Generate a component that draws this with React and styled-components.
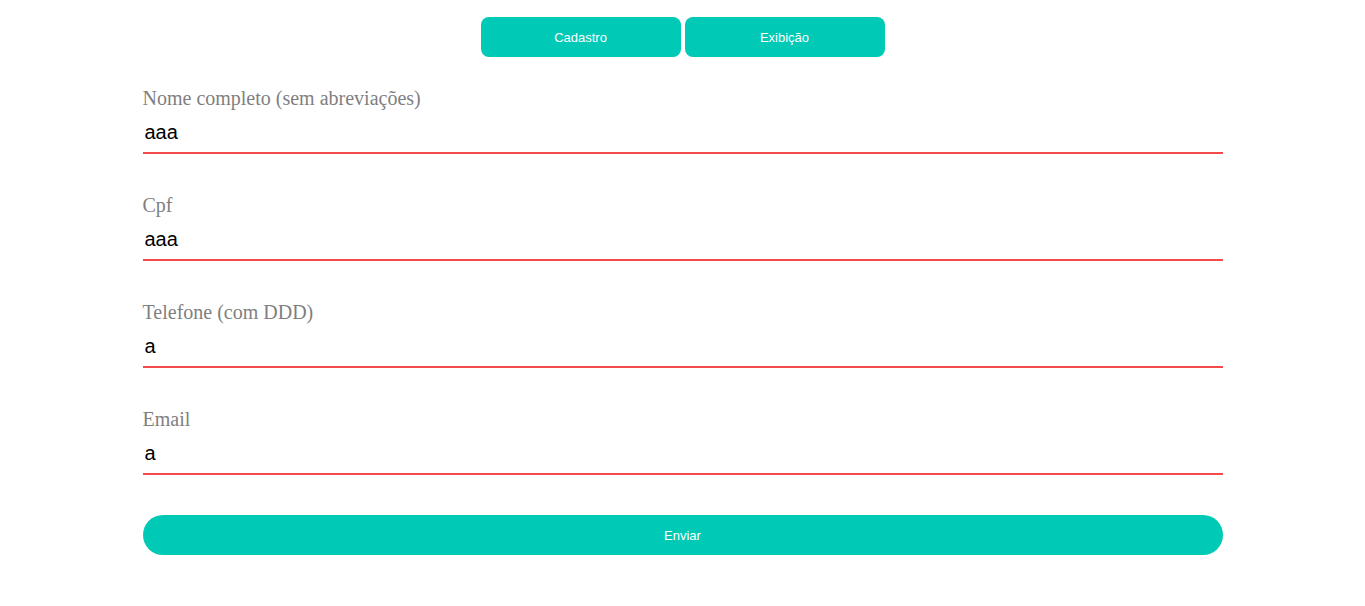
import React from 'react';
import styled, { createGlobalStyle } from 'styled-components';

const GlobalStyle = createGlobalStyle`
    body{
        margin:0;
        background:#fff;
        font-family:"Liberation Sans", Arial, sans-serif;
    }
`;

const fields = [
    { label: 'Nome completo (sem abreviações)', value: 'aaa' },
    { label: 'Cpf', value: 'aaa' },
    { label: 'Telefone (com DDD)', value: 'a' },
    { label: 'Email', value: 'a' },
];

function App() {
    return (
        <Page>
            <GlobalStyle />
            <Tabs>
                <TabBtn type="button">Cadastro</TabBtn>
                <TabBtn type="button">Exibição</TabBtn>
            </Tabs>
            <Form onSubmit={(e) => e.preventDefault()}>
                {fields.map((f) => (
                    <Field key={f.label}>
                        <Label>{f.label}</Label>
                        <Input type="text" defaultValue={f.value} />
                    </Field>
                ))}
                <SubmitBtn type="submit">Enviar</SubmitBtn>
            </Form>
        </Page>
    );
}

export default App;

const Page = styled.div`
    padding-top:17px;
    display:flex;
    flex-direction:column;
    align-items:center;
`;

const Tabs = styled.div`
    display:flex;
    gap:4px;
    margin-bottom:30px;
`;

const TabBtn = styled.button`
    width:200px;
    height:40px;
    border:0;
    border-radius:8px;
    background:#00c9b5;
    color:#fff;
    font-family:"Liberation Sans", Arial, sans-serif;
    font-size:13px;
    cursor:pointer;
`;

const Form = styled.form`
    width:1080px;
    display:flex;
    flex-direction:column;
    gap:40px;
`;

const Field = styled.div`
    display:flex;
    flex-direction:column;
`;

const Label = styled.label`
    font-family:"Liberation Serif", "Times New Roman", serif;
    font-size:20px;
    line-height:23px;
    color:#7f7f7f;
`;

const Input = styled.input`
    height:44px;
    box-sizing:border-box;
    padding:3px 2px 0;
    border:0;
    border-bottom:2px solid #f44a4a;
    outline:0;
    font-family:"Liberation Sans", Arial, sans-serif;
    font-size:20px;
    color:#000;
    background:transparent;
`;

const SubmitBtn = styled.button`
    height:40px;
    border:0;
    border-radius:20px;
    background:#00c9b5;
    color:#fff;
    font-family:"Liberation Sans", Arial, sans-serif;
    font-size:13px;
    cursor:pointer;
`;
